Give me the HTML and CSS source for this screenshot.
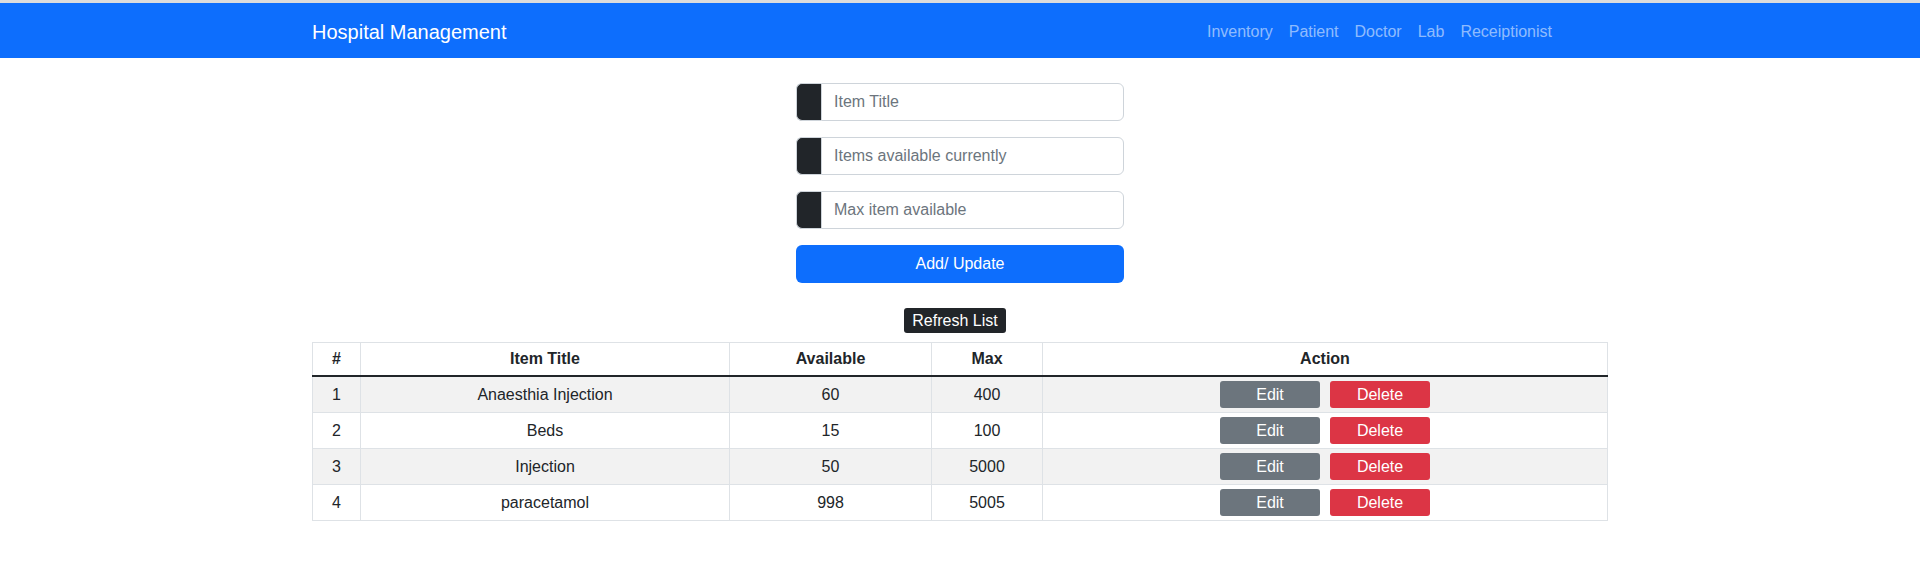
FILE: index.html
```html
<!DOCTYPE html>
<html lang="en">
<head>
<meta charset="utf-8">
<title>Hospital Management</title>
<link rel="stylesheet" href="styles.css">
</head>
<body>
<div class="topstrip"></div>
<nav class="navbar">
  <div class="container nav-inner">
    <a class="brand" href="#">Hospital Management</a>
    <ul class="nav-links">
      <li><a href="#">Inventory</a></li>
      <li><a href="#">Patient</a></li>
      <li><a href="#">Doctor</a></li>
      <li><a href="#">Lab</a></li>
      <li><a href="#">Receiptionist</a></li>
    </ul>
  </div>
</nav>
<main class="container">
  <form class="item-form">
    <div class="input-group"><span class="group-text"></span><input type="text" placeholder="Item Title"></div>
    <div class="input-group"><span class="group-text"></span><input type="text" placeholder="Items available currently"></div>
    <div class="input-group"><span class="group-text"></span><input type="text" placeholder="Max item available"></div>
    <button type="button" class="btn-primary">Add/ Update</button>
  </form>
  <div class="refresh-row"><button type="button" class="btn-dark">Refresh List</button></div>
  <table class="inv-table">
    <colgroup>
      <col class="c1"><col class="c2"><col class="c3"><col class="c4"><col class="c5">
    </colgroup>
    <thead>
      <tr><th>#</th><th>Item Title</th><th>Available</th><th>Max</th><th>Action</th></tr>
    </thead>
    <tbody>
      <tr class="odd"><td>1</td><td>Anaesthia Injection</td><td>60</td><td>400</td><td><button class="btn-edit">Edit</button><button class="btn-del">Delete</button></td></tr>
      <tr><td>2</td><td>Beds</td><td>15</td><td>100</td><td><button class="btn-edit">Edit</button><button class="btn-del">Delete</button></td></tr>
      <tr class="odd"><td>3</td><td>Injection</td><td>50</td><td>5000</td><td><button class="btn-edit">Edit</button><button class="btn-del">Delete</button></td></tr>
      <tr><td>4</td><td>paracetamol</td><td>998</td><td>5005</td><td><button class="btn-edit">Edit</button><button class="btn-del">Delete</button></td></tr>
    </tbody>
  </table>
</main>
</body>
</html>
```
FILE: styles.css
```css
* { box-sizing: border-box; }
body {
  margin: 0;
  font-family: "Liberation Sans", Arial, sans-serif;
  font-size: 16px;
  line-height: 24px;
  color: #212529;
  background: #fff;
}
.topstrip { height: 3px; background: #dcdcdc; }
.container {
  width: 1320px;
  margin: 0 auto;
  padding: 0 12px;
}
.navbar { background: #0d6efd; height: 55px; }
.nav-inner {
  display: flex;
  align-items: center;
  justify-content: space-between;
  height: 55px;
  padding-top: 2px;
}
.brand {
  color: #fff;
  text-decoration: none;
  font-size: 20px;
  line-height: 30px;
}
.nav-links {
  list-style: none;
  display: flex;
  margin: 0 48px 0 0;
  padding: 0;
}
.nav-links a {
  display: block;
  padding: 8px;
  color: rgba(255,255,255,.55);
  text-decoration: none;
}
.item-form {
  width: 328px;
  margin: 25px auto 0;
  display: flex;
  flex-direction: column;
  gap: 16px;
}
.input-group {
  display: flex;
  height: 38px;
}
.group-text {
  width: 25px;
  background: #212529;
  border: 1px solid #ced4da;
  border-right: 0;
  border-radius: 6px 0 0 6px;
}
.input-group input {
  flex: 1;
  min-width: 0;
  border: 1px solid #ced4da;
  border-radius: 0 6px 6px 0;
  padding: 6px 12px;
  font: inherit;
  color: #212529;
  outline: none;
}
.input-group input::placeholder { color: #6c757d; }
.btn-primary {
  height: 38px;
  background: #0d6efd;
  border: 0;
  border-radius: 6px;
  color: #fff;
  font: inherit;
  cursor: pointer;
}
.refresh-row {
  display: flex;
  justify-content: center;
  padding-right: 10px;
  margin-top: 25px;
  margin-bottom: 9px;
}
.btn-dark {
  height: 25px;
  padding: 0 8px;
  background: #212529;
  color: #fff;
  border: 0;
  border-radius: 3px;
  font: inherit;
  line-height: 25px;
}
.inv-table {
  width: 100%;
  border-collapse: collapse;
  table-layout: fixed;
  text-align: center;
}
.c1 { width: 48px; }
.c2 { width: 369px; }
.c3 { width: 202px; }
.c4 { width: 111px; }
.inv-table th,
.inv-table td {
  border: 1px solid #dee2e6;
  padding: 4px;
  vertical-align: middle;
}
.inv-table th { font-weight: bold; }
.inv-table thead th { border-bottom: 2px solid #212529; }
.inv-table tr.odd td { background: #f2f2f2; }
.btn-edit, .btn-del {
  width: 100px;
  height: 27px;
  border: 0;
  border-radius: 3px;
  color: #fff;
  font: inherit;
  line-height: 27px;
  padding: 0;
  vertical-align: middle;
}
.btn-edit { background: #6c757d; margin-right: 10px; }
.btn-del { background: #dc3545; }
```
